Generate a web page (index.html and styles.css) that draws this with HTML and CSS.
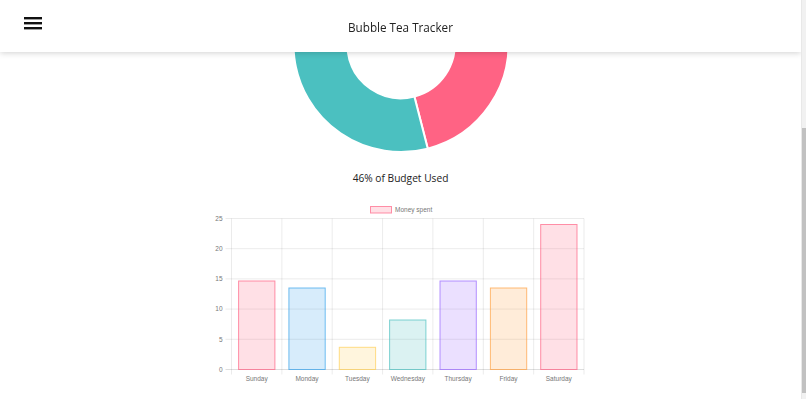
FILE: index.html
```html
<!DOCTYPE html>
<html lang="en">
<head>
<meta charset="utf-8">
<title>Bubble Tea Tracker</title>
<link rel="stylesheet" href="styles.css">
</head>
<body>
<header class="topbar">
  <div class="topbar-left">
    <button class="menu-btn" aria-label="Menu">
      <svg width="18" height="13" viewBox="0 0 18 13"><rect x="0" y="0" width="18" height="2.4" fill="#111"/><rect x="0" y="5" width="18" height="2.4" fill="#111"/><rect x="0" y="10" width="18" height="2.4" fill="#111"/></svg>
    </button>
  </div>
  <h1 class="title">Bubble Tea Tracker</h1>
  <div class="topbar-right"></div>
</header>
<main class="content">
  <section class="budget">
    <svg class="doughnut" width="220" height="220" viewBox="-110 -110.5 220 220">
      <path d="M 0 -107.5 A 107.5 107.5 0 0 1 26.73 104.12 L 13.37 52.06 A 53.75 53.75 0 0 0 0 -53.75 Z" fill="#ff6384" stroke="#fff" stroke-width="2"/>
      <path d="M 26.73 104.12 A 107.5 107.5 0 1 1 0 -107.5 L 0 -53.75 A 53.75 53.75 0 1 0 13.37 52.06 Z" fill="#4bc0c0" stroke="#fff" stroke-width="2"/>
    </svg>
    <p class="budget-label">46% of Budget Used</p>
  </section>
  <section class="weekly">
    <svg class="bar-chart" width="401" height="190" viewBox="0 0 401 190">
      <g class="legend">
        <rect x="170.5" y="6.5" width="21" height="6.5" fill="rgba(255,99,132,0.2)" stroke="#ff6384" stroke-opacity="0.7" stroke-width="1"/>
        <text x="195" y="12.2" class="tick">Money spent</text>
      </g>
      <g class="grid" stroke="rgba(0,0,0,0.08)" stroke-width="1">
        <line x1="25.5" y1="18.5" x2="384" y2="18.5"/>
        <line x1="25.5" y1="48.7" x2="384" y2="48.7"/>
        <line x1="25.5" y1="78.9" x2="384" y2="78.9"/>
        <line x1="25.5" y1="109.1" x2="384" y2="109.1"/>
        <line x1="25.5" y1="139.3" x2="384" y2="139.3"/>
        <line x1="31.5" y1="18.5" x2="31.5" y2="174.5"/>
        <line x1="81.9" y1="18.5" x2="81.9" y2="174.5"/>
        <line x1="132.2" y1="18.5" x2="132.2" y2="174.5"/>
        <line x1="182.6" y1="18.5" x2="182.6" y2="174.5"/>
        <line x1="232.9" y1="18.5" x2="232.9" y2="174.5"/>
        <line x1="283.3" y1="18.5" x2="283.3" y2="174.5"/>
        <line x1="333.7" y1="18.5" x2="333.7" y2="174.5"/>
        <line x1="384" y1="18.5" x2="384" y2="174.5"/>
      </g>
      <line x1="25.5" y1="169.5" x2="384" y2="169.5" stroke="rgba(0,0,0,0.13)" stroke-width="1"/>
      <g class="yticks">
        <text x="22.5" y="20.8" text-anchor="end" class="tick">25</text>
        <text x="22.5" y="51" text-anchor="end" class="tick">20</text>
        <text x="22.5" y="81.2" text-anchor="end" class="tick">15</text>
        <text x="22.5" y="111.4" text-anchor="end" class="tick">10</text>
        <text x="22.5" y="141.6" text-anchor="end" class="tick">5</text>
        <text x="22.5" y="171.8" text-anchor="end" class="tick">0</text>
      </g>
      <g class="bars" stroke-width="1" stroke-opacity="0.7">
        <rect x="38.6" y="81" width="36.3" height="88.5" fill="rgba(255,99,132,0.2)" stroke="#ff6384"/>
        <rect x="88.9" y="88" width="36.3" height="81.5" fill="rgba(54,162,235,0.2)" stroke="#36a2eb"/>
        <rect x="139.3" y="147.3" width="36.3" height="22.2" fill="rgba(255,206,86,0.2)" stroke="#ffce56"/>
        <rect x="189.6" y="120" width="36.3" height="49.5" fill="rgba(75,192,192,0.2)" stroke="#4bc0c0"/>
        <rect x="240" y="81" width="36.3" height="88.5" fill="rgba(153,102,255,0.2)" stroke="#9966ff"/>
        <rect x="290.4" y="88" width="36.3" height="81.5" fill="rgba(255,159,64,0.2)" stroke="#ff9f40"/>
        <rect x="340.7" y="24.5" width="36.3" height="145" fill="rgba(255,99,132,0.2)" stroke="#ff6384"/>
      </g>
      <g class="xticks" text-anchor="middle">
        <text x="56.7" y="181" class="tick">Sunday</text>
        <text x="107" y="181" class="tick">Monday</text>
        <text x="157.4" y="181" class="tick">Tuesday</text>
        <text x="207.8" y="181" class="tick">Wednesday</text>
        <text x="258.1" y="181" class="tick">Thursday</text>
        <text x="308.5" y="181" class="tick">Friday</text>
        <text x="358.8" y="181" class="tick">Saturday</text>
      </g>
    </svg>
  </section>
</main>
<div class="scrollbar" aria-hidden="true"><div class="scrollbar-thumb"></div></div>
<script src="script.js"></script>
</body>
</html>
```

FILE: styles.css
```css
html {
  background: #fff;
}
body {
  margin: 0;
  padding-right: 5px;
  font-family: "Open Sans", "Noto Sans", sans-serif;
  color: #333;
}
.topbar {
  position: fixed;
  top: 0;
  left: 0;
  right: 5px;
  height: 52px;
  background: #fff;
  box-shadow: 0 1px 6px rgba(0, 0, 0, 0.18);
  display: grid;
  grid-template-columns: 1fr auto 1fr;
  align-items: center;
  z-index: 10;
}
.topbar-left {
  align-self: start;
  padding: 17px 0 0 24px;
}
.menu-btn {
  border: 0;
  padding: 0;
  margin: 0;
  background: none;
  display: block;
  line-height: 0;
}
.title {
  margin: 2px 0 0;
  font-size: 11.7px;
  font-weight: 400;
  color: #222;
  line-height: 16px;
}
.content {
  padding: 122px 0 9px;
  display: flex;
  flex-direction: column;
  align-items: center;
}
.budget {
  display: flex;
  flex-direction: column;
  align-items: center;
}
.doughnut {
  display: block;
}
.budget-label {
  margin: 17px 0 0;
  font-size: 10.2px;
  line-height: 14px;
  color: #222;
}
.weekly {
  margin-top: 15px;
}
.bar-chart {
  display: block;
}
.tick {
  font-family: "Liberation Sans", Arial, sans-serif;
  font-size: 6.5px;
  fill: #777;
}
.scrollbar {
  position: fixed;
  top: 0;
  right: 0;
  bottom: 0;
  width: 5px;
  background: #f1f1f1;
  border-left: 1px solid #e8e8e8;
  box-sizing: border-box;
  z-index: 20;
  display: flex;
  flex-direction: column;
}
.scrollbar-thumb {
  margin-top: 128px;
  height: 265px;
  background: #c1c1c1;
}
```

FILE: script.js
```js
function toBottom() {
  window.scrollTo(0, document.documentElement.scrollHeight);
}
toBottom();
window.addEventListener('load', toBottom);
```
